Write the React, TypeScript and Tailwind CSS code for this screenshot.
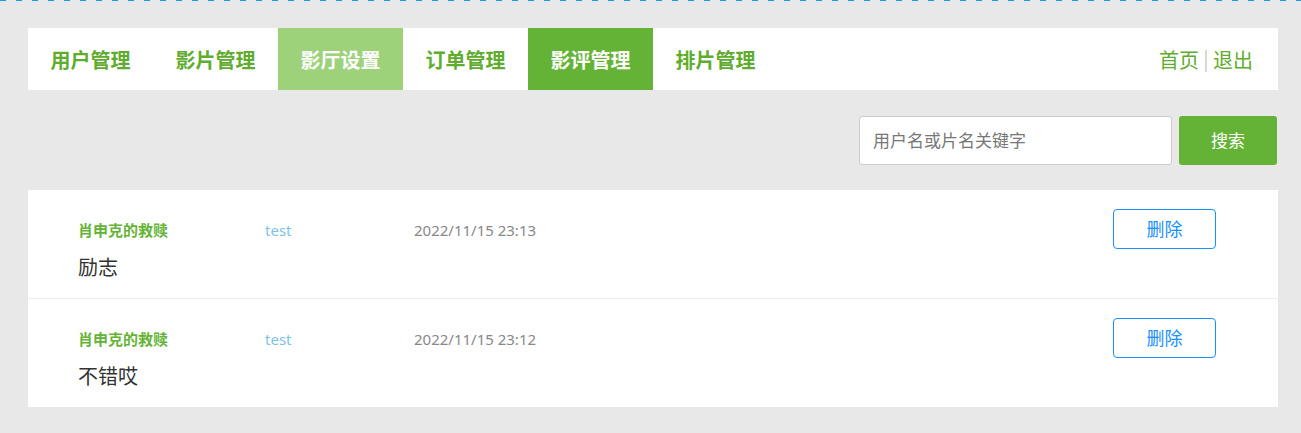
import React from 'react';

const tabs = [
  { label: '用户管理', state: 'idle' },
  { label: '影片管理', state: 'idle' },
  { label: '影厅设置', state: 'hover' },
  { label: '订单管理', state: 'idle' },
  { label: '影评管理', state: 'active' },
  { label: '排片管理', state: 'idle' },
];

const comments = [
  { movie: '肖申克的救赎', user: 'test', time: '2022/11/15 23:13', content: '励志' },
  { movie: '肖申克的救赎', user: 'test', time: '2022/11/15 23:12', content: '不错哎' },
];

export default function App() {
  return (
    <div className="min-h-[433px] bg-[#e8e8e8] font-['Noto_Sans','Noto_Sans_CJK_SC',sans-serif]">
      {/* dashed top edge */}
      <div className="h-px bg-[repeating-linear-gradient(90deg,#2196e6_0_6px,transparent_6px_16px)]" />

      <div className="pl-[28px] pr-[23px] pt-[27px]">
        {/* Nav bar */}
        <div className="flex h-[62px] items-stretch bg-white">
          {tabs.map((tab) => (
            <div
              key={tab.label}
              className={`flex w-[125px] items-center justify-center pt-[3px] text-[20px] font-bold ${
                tab.state === 'active'
                  ? 'bg-[#65b336] text-white'
                  : tab.state === 'hover'
                  ? 'bg-[#9dd27b] text-white'
                  : 'text-[#5fac2e]'
              }`}
            >
              {tab.label}
            </div>
          ))}
          <div className="ml-auto flex items-center pr-[25px] pt-[3px] text-[20px] text-[#5fac2e]">
            <span>首页</span>
            <span className="mx-[6px] h-[22px] w-[2px] bg-[#d8d8d8]" />
            <span>退出</span>
          </div>
        </div>

        {/* Search */}
        <div className="flex justify-end gap-[7px] pt-[26px]">
          <input
            placeholder="用户名或片名关键字"
            className="h-[49px] w-[313px] rounded-[3px] border border-[#ccc] bg-white px-[13px] text-[17px] text-[#555] outline-none placeholder:text-[#777]"
          />
          <button className="mr-px h-[49px] w-[98px] rounded-[3px] bg-[#65b336] text-[17px] text-white">
            搜索
          </button>
        </div>

        {/* Comment list */}
        <div className="mt-[25px] bg-white">
          {comments.map((c, i) => (
            <div
              key={i}
              className={`flex items-start pl-[50px] pr-[62px] pt-[19px] ${
                i === 0 ? 'h-[109px] border-b border-[#eee]' : 'h-[108px]'
              }`}
            >
              <div className="flex-1">
                <div className="flex items-center pt-[10px] text-[15px] leading-[22px]">
                  <span className="w-[187px] font-bold text-[#65b336]">{c.movie}</span>
                  <span className="w-[149px] text-[#7ec2ea]">{c.user}</span>
                  <span className="text-[#888]">{c.time}</span>
                </div>
                <div className="mt-[13px] text-[20px] leading-[28px] text-[#333]">{c.content}</div>
              </div>
              <button className="h-[40px] w-[103px] rounded-[4px] border border-[#1890ff] bg-white text-[18px] text-[#1890ff]">
                删除
              </button>
            </div>
          ))}
        </div>
      </div>
    </div>
  );
}
